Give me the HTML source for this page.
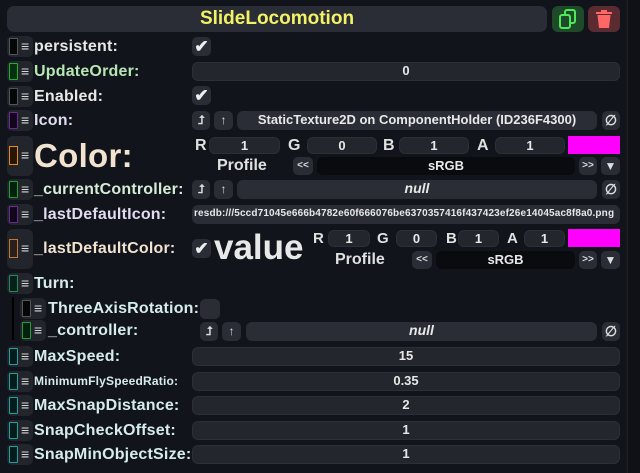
<!DOCTYPE html>
<html><head><meta charset="utf-8"><style>
*{margin:0;padding:0;box-sizing:border-box}
body{width:640px;height:473px;background:#11141b;overflow:hidden;position:relative;font-family:"Liberation Sans",sans-serif;font-weight:bold;color:#e8e8e8}
div{position:absolute}
.h{left:7px;width:26px;height:21px;background:#22252c;border-radius:5px}
.h i{position:absolute;left:2px;top:2px;width:9px;height:17px;border:1.5px solid #555;background:#050607;border-radius:1px}
.h b{position:absolute;left:14px;top:0;font-size:14px;line-height:21px;color:#d8d8d8}
.l{left:34px;font-size:16px;line-height:21px;white-space:nowrap;letter-spacing:0.2px}
.f{background:#23262d;border:1.5px solid #2c2f37;border-radius:6px;font-size:13px;text-align:center;color:#e8e8e8;line-height:15px;white-space:nowrap;overflow:hidden}
.bt{background:#2a2d35;border-radius:5px;font-size:12px;text-align:center;color:#ddd;line-height:19px}
.ck{background:#2a2d35;border-radius:5px;color:#eee;font-size:17px;text-align:center;line-height:20px}
.lt{font-size:16px;color:#e0e0e0}
.dk{background:#0a0b0e;border-radius:6px;font-size:13px;text-align:center;line-height:18px;color:#e8e8e8}
.mg{background:#ff00ff}
.gl{color:#d6ecd6}.cy{color:#d6ecec}.lv{color:#e2daf0}.pc{color:#f2e2d0}
</style></head><body>
<div style="left:627px;top:0;width:13px;height:473px;background:#0f1117;border-left:1px solid #1c1f26"></div>
<div style="left:7px;top:6px;width:540px;height:26px;background:#2a2d35;border-radius:7px;text-align:center;font-size:19px;line-height:26px;color:#f2f266">SlideLocomotion</div>
<div style="left:552px;top:6px;width:32px;height:26px;background:#1f4a2a;border-radius:6px"><svg width="32" height="26"><rect x="13" y="4" width="10" height="13" rx="2" fill="none" stroke="#4ee65a" stroke-width="2"/><rect x="8" y="9" width="10" height="13" rx="2" fill="#1f4a2a" stroke="#4ee65a" stroke-width="2"/></svg></div>
<div style="left:588px;top:6px;width:32px;height:26px;background:#5a2b30;border-radius:6px"><svg width="32" height="26"><rect x="8" y="6" width="16" height="2" fill="#ff6666"/><rect x="13" y="4" width="6" height="2" fill="#ff6666"/><path d="M9.5 9h13l-1.5 13h-10z" fill="#ff6666"/></svg></div>

<div class="h" style="top:36px"><i></i><b>≡</b></div>
<div class="l" style="top:36px">persistent:</div>
<div class="ck" style="left:192px;top:37px;width:19px;height:19px">✔</div>
<div class="h" style="top:61px"><i style="border-color:#20b030;background:#063010"></i><b>≡</b></div>
<div class="l" style="top:61px;color:#b6e6b4">UpdateOrder:</div>
<div class="f" style="left:192px;top:62px;width:428px;height:19px">0</div>
<div class="h" style="top:86px"><i></i><b>≡</b></div>
<div class="l" style="top:86px">Enabled:</div>
<div class="ck" style="left:192px;top:86px;width:19px;height:19px">✔</div>
<div class="h" style="top:110px"><i style="border-color:#6a2a90;background:#12061c"></i><b>≡</b></div>
<div class="l lv" style="top:110px">Icon:</div>
<div class="bt" style="left:192px;top:111px;width:18px;height:19px">⮥</div>
<div class="bt" style="left:214px;top:111px;width:19px;height:19px">↑</div>
<div class="f" style="left:237px;top:111px;width:360px;height:19px;background:#2a2d35;border-color:#2a2d35">StaticTexture2D on ComponentHolder (ID236F4300)</div>
<div class="bt" style="left:602px;top:111px;width:18px;height:19px;font-size:14px">∅</div>
<div style="left:7px;top:136px;width:26px;height:40px;background:#22252c;border-radius:6px"><i style="position:absolute;left:2px;top:10px;width:9px;height:19px;border:1.5px solid #e08a20;background:#2a1606"></i><b style="position:absolute;left:14px;top:9px;font-size:14px;line-height:21px;color:#d8d8d8">≡</b></div>
<div class="l pc" style="top:136px;font-size:33px;line-height:40px;letter-spacing:0.3px">Color:</div>
<div class="lt" style="left:195px;top:137px">R</div>
<div class="f" style="left:209px;top:137px;width:71px;height:17px">1</div>
<div class="lt" style="left:288px;top:137px">G</div>
<div class="f" style="left:307px;top:137px;width:70px;height:17px">0</div>
<div class="lt" style="left:383px;top:137px">B</div>
<div class="f" style="left:399px;top:137px;width:70px;height:17px">1</div>
<div class="lt" style="left:477px;top:137px">A</div>
<div class="f" style="left:495px;top:137px;width:70px;height:17px">1</div>
<div class="mg" style="left:568px;top:136px;width:52px;height:18px"></div>
<div class="lt" style="left:217px;top:157px;font-size:16px">Profile</div>
<div class="bt" style="left:293px;top:157px;width:20px;height:18px;font-size:10px;line-height:18px">&lt;&lt;</div>
<div class="dk" style="left:317px;top:157px;width:258px;height:18px">sRGB</div>
<div class="bt" style="left:579px;top:157px;width:18px;height:18px;font-size:10px;line-height:18px">&gt;&gt;</div>
<div class="bt" style="left:601px;top:157px;width:19px;height:18px;line-height:18px">▼</div>
<div class="h" style="top:179px"><i style="border-color:#20a030;background:#062010"></i><b>≡</b></div>
<div class="l gl" style="top:179px">_currentController:</div>
<div class="bt" style="left:192px;top:180px;width:18px;height:19px">⮥</div>
<div class="bt" style="left:214px;top:180px;width:19px;height:19px">↑</div>
<div class="f" style="left:237px;top:180px;width:360px;height:19px;background:#2a2d35;border-color:#2a2d35;font-style:italic;font-size:14px">null</div>
<div class="bt" style="left:602px;top:180px;width:18px;height:19px;font-size:14px">∅</div>
<div class="h" style="top:204px"><i style="border-color:#6a2a90;background:#12061c"></i><b>≡</b></div>
<div class="l lv" style="top:204px">_lastDefaultIcon:</div>
<div class="f" style="left:192px;top:205px;width:428px;height:19px;font-size:10px;line-height:16px;background:#2a2d35;border-color:#2a2d35;text-align:left;padding-left:1px;letter-spacing:0.15px">resdb:///5ccd71045e666b4782e60f666076be6370357416f437423ef26e14045ac8f8a0.png</div>
<div style="left:7px;top:229px;width:26px;height:40px;background:#22252c;border-radius:6px"><i style="position:absolute;left:2px;top:10px;width:9px;height:19px;border:1.5px solid #c07a30;background:#2a2020"></i><b style="position:absolute;left:14px;top:9px;font-size:14px;line-height:21px;color:#d8d8d8">≡</b></div>
<div class="l pc" style="top:238px">_lastDefaultColor:</div>
<div class="ck" style="left:192px;top:239px;width:19px;height:19px">✔</div>
<div style="left:214px;top:228px;font-size:35px;line-height:40px;color:#e8e8e8">value</div>
<div class="lt" style="left:313px;top:230px;font-size:15px">R</div>
<div class="f" style="left:328px;top:230px;width:42px;height:17px">1</div>
<div class="lt" style="left:377px;top:230px;font-size:15px">G</div>
<div class="f" style="left:396px;top:230px;width:41px;height:17px">0</div>
<div class="lt" style="left:446px;top:230px;font-size:15px">B</div>
<div class="f" style="left:458px;top:230px;width:41px;height:17px">1</div>
<div class="lt" style="left:507px;top:230px;font-size:15px">A</div>
<div class="f" style="left:524px;top:230px;width:41px;height:17px">1</div>
<div class="mg" style="left:568px;top:229px;width:52px;height:18px"></div>
<div class="lt" style="left:335px;top:251px">Profile</div>
<div class="bt" style="left:412px;top:251px;width:20px;height:18px;font-size:10px;line-height:18px">&lt;&lt;</div>
<div class="dk" style="left:436px;top:251px;width:139px;height:18px">sRGB</div>
<div class="bt" style="left:579px;top:251px;width:18px;height:18px;font-size:10px;line-height:18px">&gt;&gt;</div>
<div class="bt" style="left:601px;top:251px;width:19px;height:18px;line-height:18px">▼</div>
<div class="h" style="top:273px"><i style="border-color:#208a60;background:#062018"></i><b>≡</b></div>
<div class="l cy" style="top:273px">Turn:</div>
<div style="left:12px;top:297px;width:2px;height:43px;background:#000"></div>
<div class="h" style="left:20px;top:298px"><i style="border-color:#555"></i><b>≡</b></div>
<div class="l cy" style="left:48px;top:298px">ThreeAxisRotation:</div>
<div class="ck" style="left:200px;top:299px;width:20px;height:20px"></div>
<div class="h" style="left:20px;top:320px"><i style="border-color:#20a030;background:#062010"></i><b>≡</b></div>
<div class="l cy" style="left:48px;top:320px">_controller:</div>
<div class="bt" style="left:200px;top:322px;width:18px;height:19px">⮥</div>
<div class="bt" style="left:222px;top:322px;width:19px;height:19px">↑</div>
<div class="f" style="left:246px;top:322px;width:351px;height:19px;background:#2a2d35;border-color:#2a2d35;font-style:italic;font-size:14px">null</div>
<div class="bt" style="left:602px;top:322px;width:18px;height:19px;font-size:14px">∅</div>
<div class="h" style="top:346px"><i style="border-color:#20a0a0;background:#041c1c"></i><b>≡</b></div>
<div class="l cy" style="top:346px">MaxSpeed:</div>
<div class="f" style="left:192px;top:347px;width:428px;height:19px">15</div>
<div class="h" style="top:371px"><i style="border-color:#20a0a0;background:#041c1c"></i><b>≡</b></div>
<div class="l cy" style="top:371px;font-size:12px;letter-spacing:0.2px">MinimumFlySpeedRatio:</div>
<div class="f" style="left:192px;top:372px;width:428px;height:19px">0.35</div>
<div class="h" style="top:395px"><i style="border-color:#20a0a0;background:#041c1c"></i><b>≡</b></div>
<div class="l cy" style="top:395px">MaxSnapDistance:</div>
<div class="f" style="left:192px;top:396px;width:428px;height:19px">2</div>
<div class="h" style="top:420px"><i style="border-color:#20a0a0;background:#041c1c"></i><b>≡</b></div>
<div class="l cy" style="top:420px">SnapCheckOffset:</div>
<div class="f" style="left:192px;top:421px;width:428px;height:19px">1</div>
<div class="h" style="top:444px"><i style="border-color:#20a0a0;background:#041c1c"></i><b>≡</b></div>
<div class="l cy" style="top:444px">SnapMinObjectSize:</div>
<div class="f" style="left:192px;top:445px;width:428px;height:19px">1</div>
</body></html>
